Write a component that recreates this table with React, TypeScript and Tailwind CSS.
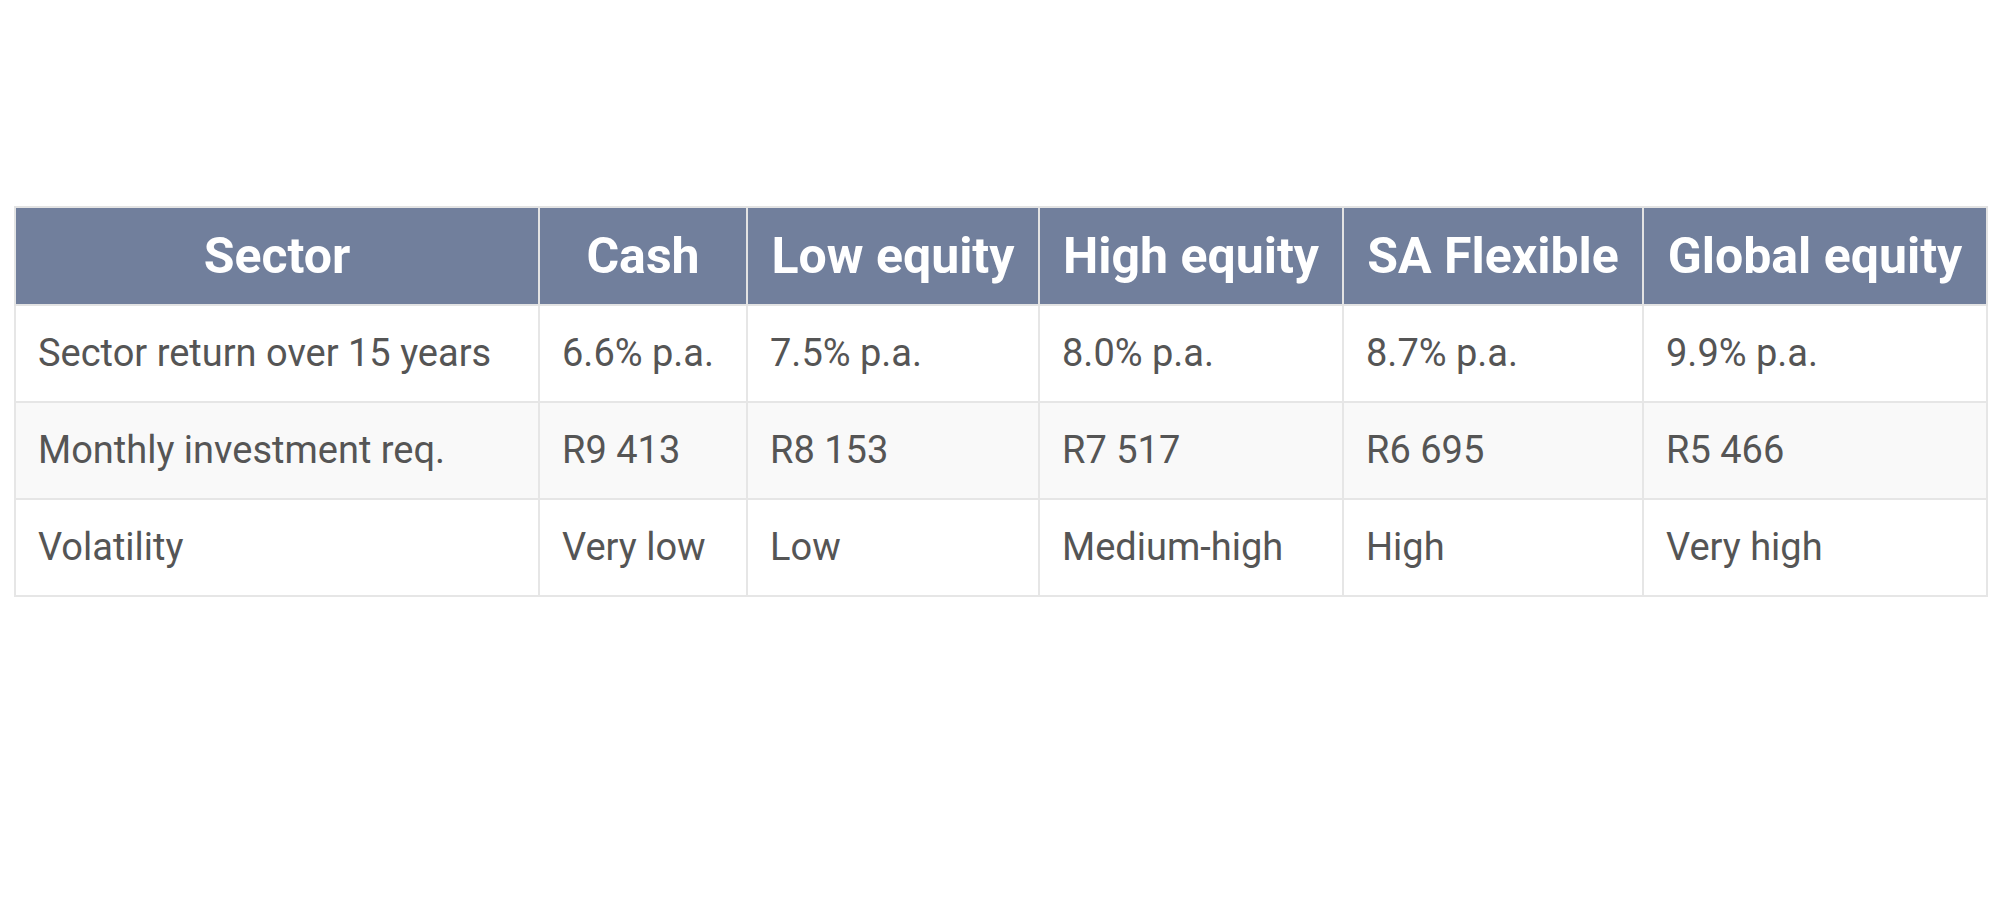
const headers = ["Sector", "Cash", "Low equity", "High equity", "SA Flexible", "Global equity"];

const rows = [
  ["Sector return over 15 years", "6.6% p.a.", "7.5% p.a.", "8.0% p.a.", "8.7% p.a.", "9.9% p.a."],
  ["Monthly investment req.", "R9 413", "R8 153", "R7 517", "R6 695", "R5 466"],
  ["Volatility", "Very low", "Low", "Medium-high", "High", "Very high"],
];

const widths = ["w-[524px]", "w-[208px]", "w-[292px]", "w-[304px]", "w-[300px]", "w-[344px]"];

export default function App() {
  return (
    <div className="min-h-[900px] bg-white px-[14px] pt-[206px] font-['Roboto',sans-serif]">
      <table className="w-full table-fixed border-collapse border-2 border-[#e6e6e6]">
        <colgroup>
          {widths.map((w, i) => (
            <col key={i} className={w} />
          ))}
        </colgroup>
        <thead>
          <tr className="h-[98px] bg-[#717f9c]">
            {headers.map((h) => (
              <th
                key={h}
                className="whitespace-nowrap border-2 border-[#e3e3e3] px-2 text-center text-[50px] font-bold text-white"
              >
                {h}
              </th>
            ))}
          </tr>
        </thead>
        <tbody>
          {rows.map((row, r) => (
            <tr key={r} className={`h-[97px] ${r === 1 ? "bg-[#f9f9f9]" : "bg-white"}`}>
              {row.map((cell, c) => (
                <td
                  key={c}
                  className="whitespace-nowrap border-2 border-[#e6e6e6] px-[22px] text-left text-[38px] text-[#555555]"
                >
                  {cell}
                </td>
              ))}
            </tr>
          ))}
        </tbody>
      </table>
    </div>
  );
}
